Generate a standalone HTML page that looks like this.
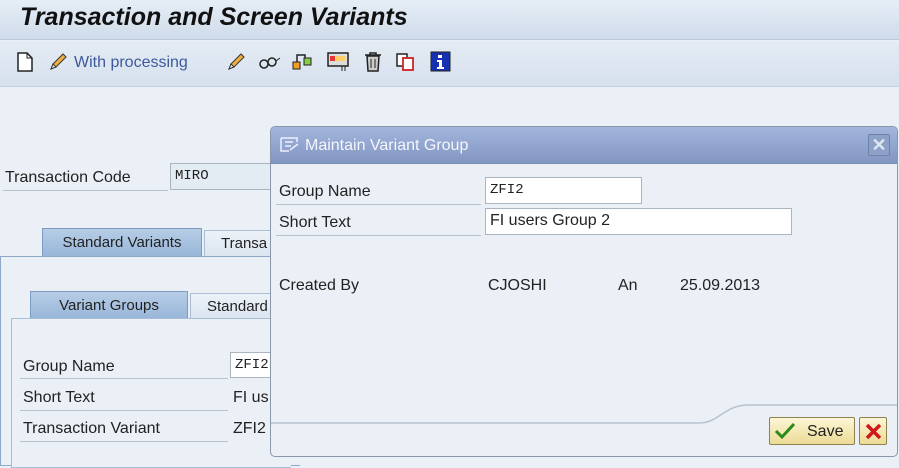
<!DOCTYPE html>
<html><head><meta charset="utf-8"><style>
*{margin:0;padding:0;box-sizing:border-box}
body{width:899px;height:458px;overflow:hidden;background:#eaf0f6;font-family:"Liberation Sans",sans-serif;font-size:15px;color:#222;position:relative}
.a{position:absolute}
.title{left:0;top:0;width:899px;height:40px;background:linear-gradient(#e6edf6,#cfdcea);border-bottom:1px solid #b8c8da}
.title span{position:absolute;left:20px;top:3px;font-size:25px;font-weight:bold;font-style:italic;color:#111}
.tb{left:0;top:41px;width:899px;height:46px;background:linear-gradient(#e4ebf4,#d6e1ee);border-bottom:1px solid #c3d0de}
.lbl{white-space:nowrap}
.ul{border-bottom:1px solid #b9c3ce}
.inp{background:#fff;border:1px solid #aab5c0;font-family:"Liberation Mono",monospace;font-size:14px;padding:4px 4px}
.tab{background:linear-gradient(#b7cde6,#98b6d9);border:1px solid #7d9cc4;border-bottom:none;height:28px;font-size:15px;padding:5px 0 0 0;text-align:center}
.tab2{background:linear-gradient(#edf2f8,#dbe5f0);border:1px solid #a9bdd5;border-bottom:none}
</style></head><body>
<div class="a title"><span>Transaction and Screen Variants</span></div>
<div class="a tb">
 <svg class="a" style="left:16px;top:10px" width="18" height="22"><path d="M2 2h9l5 5v13H2z" fill="#fff" stroke="#222" stroke-width="1.5"/><path d="M11 2v5h5" fill="none" stroke="#222"/></svg>
 <svg class="a" style="left:48px;top:11px" width="20" height="20"><path d="M3 17l2-5 10-10 3 3-10 10z" fill="#f0b040" stroke="#333"/><path d="M3 17l2-5 3 3z" fill="#eee" stroke="#333"/></svg>
 <span class="a" style="left:74px;top:13px;color:#3d5a99;font-size:16px">With processing</span>
 <svg class="a" style="left:226px;top:11px" width="20" height="20"><path d="M3 17l2-5 10-10 3 3-10 10z" fill="#f0b040" stroke="#333"/><path d="M3 17l2-5 3 3z" fill="#eee" stroke="#333"/></svg>
 <svg class="a" style="left:258px;top:12px" width="24" height="18"><circle cx="6" cy="11" r="4" fill="none" stroke="#222" stroke-width="1.5"/><circle cx="14" cy="9" r="4" fill="none" stroke="#222" stroke-width="1.5"/><path d="M18 8l4-3" stroke="#222"/></svg>
 <svg class="a" style="left:292px;top:9px" width="24" height="22"><path d="M5 12V5h8v3" fill="none" stroke="#222" stroke-width="1.5"/><rect x="1" y="12" width="7" height="7" fill="#f0a020" stroke="#222"/><rect x="12" y="8" width="7" height="7" fill="#8c4" stroke="#222"/></svg>
 <svg class="a" style="left:327px;top:10px" width="24" height="22"><rect x="1" y="2" width="20" height="13" fill="#ddd" stroke="#222" stroke-width="1.5"/><rect x="3" y="5" width="5" height="5" fill="#e33"/><rect x="9" y="5" width="9" height="5" fill="#fc6"/><path d="M15 15v5M18 15v5" stroke="#222"/></svg>
 <svg class="a" style="left:363px;top:10px" width="20" height="22"><path d="M2 4h16M7 4V2h6v2" stroke="#222" fill="none" stroke-width="1.5"/><path d="M4 5h12l-1 15H5z" fill="#ccc" stroke="#222" stroke-width="1.5"/><path d="M8 8v9M12 8v9" stroke="#222"/></svg>
 <svg class="a" style="left:396px;top:11px" width="20" height="20"><rect x="1" y="2" width="10" height="12" fill="#fff" stroke="#222" stroke-width="1.5"/><rect x="7" y="6" width="10" height="12" fill="#fff" stroke="#c22" stroke-width="1.8"/></svg>
 <svg class="a" style="left:430px;top:10px" width="22" height="22"><rect x="1" y="1" width="19" height="19" fill="#1530b0" stroke="#222"/><rect x="8" y="4" width="4" height="3" fill="#fff"/><path d="M7 9h5v7h2v2H7v-2h2v-5H7z" fill="#fff"/></svg>
</div>

<span class="a lbl" style="left:5px;top:169px;font-size:16px">Transaction Code</span>
<div class="a ul" style="left:3px;top:190px;width:165px"></div>
<div class="a inp" style="left:170px;top:163px;width:110px;height:27px;background:#e3ebf3">MIRO</div>

<div class="a tab" style="left:42px;top:228px;width:160px">Standard Variants</div>
<div class="a tab tab2" style="left:204px;top:230px;width:80px;height:26px;padding:4px 0 0 16px;text-align:left">Transa</div>
<div class="a" style="left:0;top:256px;width:300px;height:210px;border:1px solid #8fa9c9;border-right:none;background:#eaf0f6"></div>
<div class="a tab" style="left:30px;top:291px;width:158px">Variant Groups</div>
<div class="a tab tab2" style="left:190px;top:293px;width:90px;height:25px;padding:4px 0 0 16px;text-align:left">Standard</div>
<div class="a" style="left:11px;top:318px;width:280px;height:150px;border:1px solid #a9bdd5;border-right:none;background:#eaf0f6"></div>
<span class="a lbl" style="left:23px;top:358px;font-size:16px">Group Name</span>
<div class="a ul" style="left:20px;top:378px;width:208px"></div>
<div class="a inp" style="left:230px;top:352px;width:60px;height:26px">ZFI2</div>
<span class="a lbl" style="left:23px;top:389px;font-size:16px">Short Text</span>
<div class="a ul" style="left:20px;top:410px;width:208px"></div>
<span class="a lbl" style="left:233px;top:389px;font-size:16px">FI us</span>
<span class="a lbl" style="left:23px;top:420px;font-size:16px">Transaction Variant</span>
<div class="a ul" style="left:20px;top:441px;width:208px"></div>
<span class="a lbl" style="left:233px;top:420px;font-size:16px">ZFI2</span>

<div class="a" style="left:270px;top:126px;width:628px;height:331px;border:1px solid #8a97a8;border-radius:5px;background:#eaf0f6;overflow:hidden">
 <div class="a" style="left:0;top:0;width:628px;height:37px;background:linear-gradient(#a3b5dc,#8296c2);border-bottom:1px solid #7a8fb5"></div>
 <svg class="a" style="left:9px;top:10px" width="20" height="16"><path d="M1 1h16v4M1 1v13h8" fill="none" stroke="#eef" stroke-width="1.5"/><path d="M5 5h8M5 9h6M10 13l8-6" stroke="#eef" stroke-width="1.5"/></svg>
 <span class="a lbl" style="left:34px;top:10px;color:#f4f6fb;font-size:16px">Maintain Variant Group</span>
 <div class="a" style="left:597px;top:7px;width:22px;height:22px;border:1px solid #6f83a8;background:#8da0c8;border-radius:2px;color:#dfe6f3;font-size:18px;font-weight:bold;text-align:center;line-height:20px">✕</div>
 <span class="a lbl" style="left:8px;top:56px;font-size:16px">Group Name</span>
 <div class="a ul" style="left:5px;top:77px;width:205px"></div>
 <div class="a inp" style="left:214px;top:50px;width:157px;height:27px">ZFI2</div>
 <span class="a lbl" style="left:8px;top:87px;font-size:16px">Short Text</span>
 <div class="a ul" style="left:5px;top:108px;width:205px"></div>
 <div class="a inp" style="left:214px;top:81px;width:307px;height:27px;font-family:'Liberation Sans',sans-serif;font-size:16px;padding-top:3px">FI users Group 2</div>
 <span class="a lbl" style="left:8px;top:150px;font-size:16px">Created By</span>
 <span class="a lbl" style="left:217px;top:150px;font-size:16px">CJOSHI</span>
 <span class="a lbl" style="left:347px;top:150px;font-size:16px">An</span>
 <span class="a lbl" style="left:409px;top:150px;font-size:16px">25.09.2013</span>
 <svg class="a" style="left:0;top:260px" width="628" height="60"><path d="M0 36H428C448 36 452 19 476 18H628" fill="none" stroke="#b8c2cd" stroke-width="1.5"/></svg>
 <div class="a" style="left:498px;top:290px;width:86px;height:28px;background:linear-gradient(#fcf6d6,#ecdc95);border:1px solid #8d8150;border-radius:2px"><svg class="a" style="left:4px;top:4px" width="22" height="18"><path d="M2 9l6 6L20 2" fill="none" stroke="#2a8a1a" stroke-width="3"/></svg><span class="a" style="left:37px;top:5px;font-size:16px">Save</span></div>
 <div class="a" style="left:588px;top:290px;width:28px;height:28px;background:linear-gradient(#fcf6d6,#ecdc95);border:1px solid #8d8150;border-radius:2px"><svg class="a" style="left:4px;top:4px" width="19" height="19"><path d="M3 3l13 13M16 3L3 16" stroke="#d01818" stroke-width="3.5"/></svg></div>
</div>
</body></html>
